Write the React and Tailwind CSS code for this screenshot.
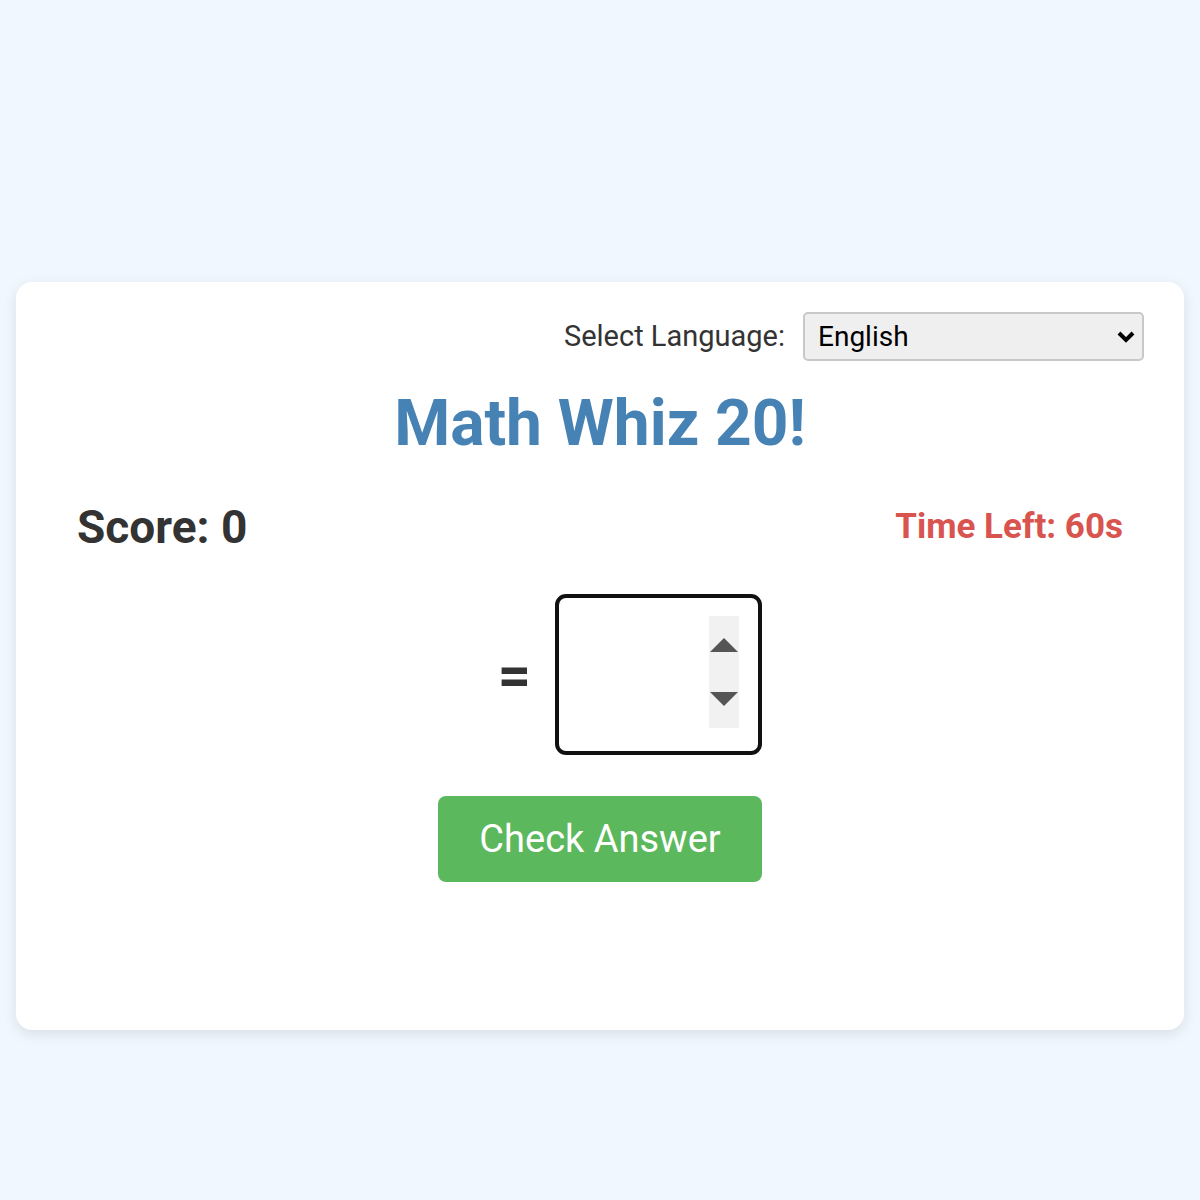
import { useState } from 'react';

const font = { fontFamily: 'Roboto, "Liberation Sans", sans-serif' };

const SpinButtons = () => (
  <div className="absolute right-[23px] top-[22px] flex h-[112px] w-[30px] flex-col items-center justify-center gap-[38px] rounded-[2px] bg-[#f1f1f1]">
    <svg width="28" height="16" viewBox="0 0 28 16">
      <path d="M14 1 L28 15 L0 15 Z" fill="#555" />
    </svg>
    <svg width="28" height="16" viewBox="0 0 28 16">
      <path d="M0 1 L28 1 L14 15 Z" fill="#555" />
    </svg>
  </div>
);

const App = () => {
  const [answer, setAnswer] = useState('');
  const [lang, setLang] = useState('en');

  return (
    <div className="min-h-[1200px] bg-[#f0f7ff] px-4 pt-[282px]" style={font}>
      <div className="h-[748px] rounded-2xl bg-white px-10 pt-[30px] shadow-[0_4px_14px_rgba(0,0,0,0.1)]">
        <div className="flex items-center justify-end gap-[18px]">
          <label className="text-[29px] text-[#333]">Select Language:</label>
          <div className="relative">
            <select
              value={lang}
              onChange={(e) => setLang(e.target.value)}
              className="h-[49px] w-[341px] appearance-none rounded-[5px] border-2 border-[#c8c8c8] bg-[#efefef] px-[13px] text-[28px] text-black outline-none"
            >
              <option value="en">English</option>
              <option value="es">Español</option>
              <option value="fr">Français</option>
            </select>
            <svg
              className="pointer-events-none absolute right-[8px] top-[18px]"
              width="20"
              height="14"
              viewBox="0 0 20 14"
            >
              <path d="M3 3 L10 10 L17 3" fill="none" stroke="#000" strokeWidth="4" />
            </svg>
          </div>
        </div>

        <h1 className="mt-[25px] text-center text-[64px] font-bold leading-[75px] text-[#4682b4]">Math Whiz 20!</h1>

        <div className="mt-[32px] flex items-center justify-between px-[21px]">
          <span className="text-[46px] font-bold text-[#333]">Score: 0</span>
          <span className="text-[35px] font-bold text-[#d9534f]">Time Left: 60s</span>
        </div>

        <div className="mt-[32px] flex items-center justify-center">
          <span className="invisible w-[60px]" />
          <span className="text-[58px] font-bold leading-none text-[#333]">=</span>
          <div className="relative ml-[24px]">
            <input
              type="text"
              inputMode="numeric"
              value={answer}
              onChange={(e) => setAnswer(e.target.value)}
              className="h-[161px] w-[207px] rounded-[11px] border-[4px] border-[#111] bg-white px-3 text-[40px] outline-none"
            />
            <SpinButtons />
          </div>
        </div>

        <div className="mt-[41px] flex justify-center">
          <button className="h-[86px] w-[324px] rounded-lg bg-[#5cb85c] text-[38px] text-white">Check Answer</button>
        </div>
      </div>
    </div>
  );
};

export default App;
